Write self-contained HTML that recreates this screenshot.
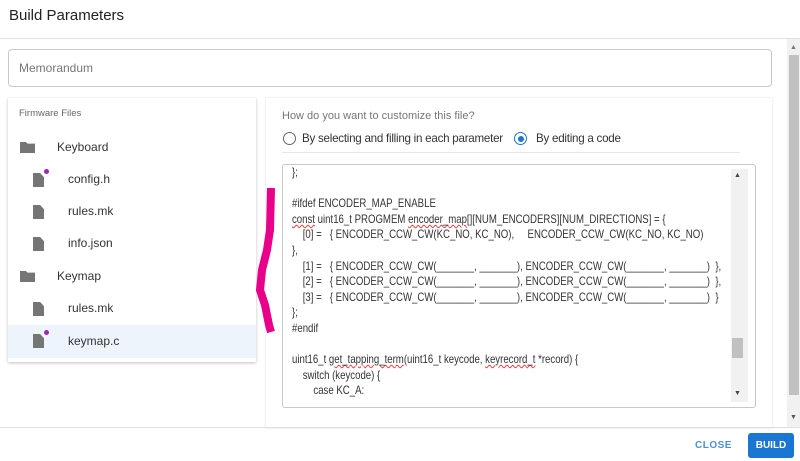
<!DOCTYPE html><html><head><style>
body{margin:0;width:800px;height:461px;overflow:hidden;background:#fff;font-family:"Liberation Sans",sans-serif;position:relative;color:#333}
.a{position:absolute}
.ti{left:9px;top:7px;font-size:15px;color:#222}
.code{left:292px;top:165px;font-size:11.6px;line-height:15.6px;white-space:pre;color:#333;transform:scaleX(0.83);transform-origin:0 0}
.w{text-decoration:underline wavy #e33;text-decoration-thickness:1px}
.it{position:absolute;font-size:12px;color:#333}
.fi{position:absolute;width:11px;height:14px;background:#757575;clip-path:polygon(0 0,65% 0,100% 30%,100% 100%,0 100%)}
.fo{position:absolute;width:15px;height:11px;background:#757575;clip-path:polygon(0 0,40% 0,50% 15%,100% 15%,100% 100%,0 100%)}
.dot{position:absolute;width:5px;height:5px;border-radius:50%;background:#9c27b0}
.r{font-size:11.6px;letter-spacing:-0.25px}
</style></head><body>
<div class="a ti">Build Parameters</div>
<div class="a" style="left:0;top:38px;width:800px;height:1px;background:#e0e0e0"></div>
<div class="a" style="left:0;top:427px;width:800px;height:1px;background:#e0e0e0"></div>
<div class="a" style="left:787px;top:39px;width:13px;height:388px;background:#f1f1f1"></div>
<div class="a" style="left:789px;top:55px;width:10px;height:340px;background:#c1c1c1"></div>
<div class="a" style="left:790px;top:44px;font-size:7px;color:#777">▲</div>
<div class="a" style="left:790px;top:414px;font-size:7px;color:#555">▼</div>
<div class="a" style="left:8px;top:49px;width:762px;height:36px;border:1px solid #c8c8c8;border-radius:4px"></div>
<div class="a" style="left:19px;top:61px;font-size:12px;color:#777">Memorandum</div>
<div class="a" style="left:8px;top:98px;width:248px;height:264px;background:#fff;box-shadow:0 1px 3px rgba(0,0,0,.25)"></div>
<div class="a" style="left:19px;top:108px;font-size:9.5px;color:#666">Firmware Files</div>
<div class="a" style="left:8px;top:325px;width:248px;height:33px;background:#edf4fb"></div>
<div class="fo" style="left:20px;top:142px"></div><div class="it" style="left:57px;top:140px">Keyboard</div>
<div class="fi" style="left:33px;top:173px"></div><div class="dot" style="left:44px;top:169px"></div><div class="it" style="left:68px;top:172px">config.h</div>
<div class="fi" style="left:33px;top:205px"></div><div class="it" style="left:68px;top:204px">rules.mk</div>
<div class="fi" style="left:33px;top:237px"></div><div class="it" style="left:68px;top:236px">info.json</div>
<div class="fo" style="left:20px;top:271px"></div><div class="it" style="left:57px;top:269px">Keymap</div>
<div class="fi" style="left:33px;top:302px"></div><div class="it" style="left:68px;top:301px">rules.mk</div>
<div class="fi" style="left:33px;top:334px"></div><div class="dot" style="left:44px;top:330px"></div><div class="it" style="left:68px;top:334px">keymap.c</div>
<div class="a" style="left:266px;top:98px;width:506px;height:330px;box-shadow:0 0 2px rgba(0,0,0,.15)"></div>
<div class="a" style="left:282px;top:110px;font-size:11px;color:#777">How do you want to customize this file?</div>
<div class="a" style="left:283px;top:132px;width:11px;height:11px;border:1.5px solid #666;border-radius:50%"></div>
<div class="a r" style="left:302px;top:132px">By selecting and filling in each parameter</div>
<div class="a" style="left:514px;top:132px;width:11px;height:11px;border:1.5px solid #1976d2;border-radius:50%"></div>
<div class="a" style="left:518px;top:136px;width:6px;height:6px;background:#1976d2;border-radius:50%"></div>
<div class="a r" style="left:536px;top:132px">By editing a code</div>
<div class="a" style="left:282px;top:152px;width:458px;height:1px;background:#e6e6e6"></div>
<div class="a" style="left:282px;top:164px;width:472px;height:242px;border:1px solid #c8c8c8;border-radius:3px"></div>
<div class="a code">};

#ifdef ENCODER_MAP_ENABLE
<span class="w">const</span> uint16_t PROGMEM <span class="w">encoder_map</span>[][NUM_ENCODERS][NUM_DIRECTIONS] = {
    [0] =   { ENCODER_CCW_CW(KC_NO, KC_NO),     ENCODER_CCW_CW(KC_NO, KC_NO)
},
    [1] =   { ENCODER_CCW_CW(_______, _______), ENCODER_CCW_CW(_______, _______)  },
    [2] =   { ENCODER_CCW_CW(_______, _______), ENCODER_CCW_CW(_______, _______)  },
    [3] =   { ENCODER_CCW_CW(_______, _______), ENCODER_CCW_CW(_______, _______)  }
};
#endif

uint16_t <span class="w">get_tapping_term</span>(uint16_t keycode, <span class="w">keyrecord_t</span> *record) {
    switch (keycode) {
        case KC_A:</div>
<div class="a" style="left:731px;top:169px;width:17px;height:233px;background:#f1f1f1"></div>
<div class="a" style="left:732px;top:338px;width:11px;height:20px;background:#c1c1c1"></div>
<div class="a" style="left:734px;top:172px;font-size:7px;color:#444">▲</div>
<div class="a" style="left:734px;top:390px;font-size:7px;color:#444">▼</div>
<svg class="a" style="left:250px;top:180px" width="30" height="160"><path d="M21 8 L20 50 L17 70 L12 90 L10 110 L15 125 L19 145 L21 152" fill="none" stroke="#e8008a" stroke-width="8"/></svg>
<div class="a" style="left:695px;top:440px;font-size:10px;font-weight:bold;color:#4a90d9;letter-spacing:.5px">CLOSE</div>
<div class="a" style="left:748px;top:433px;width:46px;height:25px;background:#1976d2;border-radius:3px;color:#fff;font-size:10px;font-weight:bold;text-align:center;line-height:25px">BUILD</div>
</body></html>
